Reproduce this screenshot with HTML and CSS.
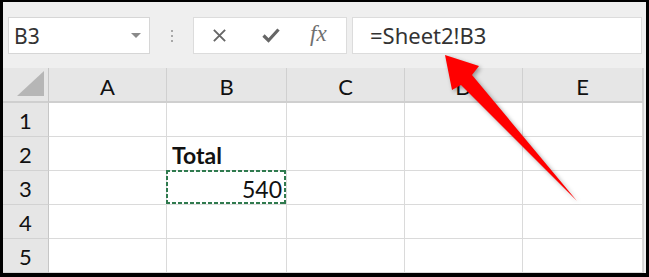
FILE: index.html
```html
<!doctype html>
<html lang="en">

<head>
  <meta charset="utf-8">
  <meta name="viewport" content="width=device-width, initial-scale=1">
  <link rel="stylesheet" href="styles.css">
  <title>Sheet reference</title>
</head>

<body>
  <div class="screen">
    <div class="window">
      <div class="toolbar">
        <div class="namebox">
          <span class="namebox-text">B3</span>
          <span class="namebox-arrow"></span>
        </div>
        <div class="grip">
          <span></span><span></span><span></span>
        </div>
        <div class="buttons">
          <svg class="btn-cancel" viewBox="0 0 16 16">
            <path d="M2 2L14 14M14 2L2 14" stroke="#666" stroke-width="2" fill="none" />
          </svg>
          <svg class="btn-enter" viewBox="0 0 18 15">
            <path d="M1.5 7.5L6.5 12.5L16.5 1.5" stroke="#666" stroke-width="3.2" fill="none" />
          </svg>
          <span class="fx">fx</span>
        </div>
        <div class="formula">=Sheet2!B3</div>
      </div>

      <div class="sheet">
        <div class="corner"><span class="corner-tri"></span></div>
        <div class="col-head">A</div>
        <div class="col-head">B</div>
        <div class="col-head">C</div>
        <div class="col-head">D</div>
        <div class="col-head">E</div>

        <div class="row-head">1</div>
        <div class="cell"></div>
        <div class="cell"></div>
        <div class="cell"></div>
        <div class="cell"></div>
        <div class="cell"></div>

        <div class="row-head">2</div>
        <div class="cell"></div>
        <div class="cell bold">Total</div>
        <div class="cell"></div>
        <div class="cell"></div>
        <div class="cell"></div>

        <div class="row-head">3</div>
        <div class="cell"></div>
        <div class="cell num copied">540</div>
        <div class="cell"></div>
        <div class="cell"></div>
        <div class="cell"></div>

        <div class="row-head">4</div>
        <div class="cell"></div>
        <div class="cell"></div>
        <div class="cell"></div>
        <div class="cell"></div>
        <div class="cell"></div>

        <div class="row-head">5</div>
        <div class="cell"></div>
        <div class="cell"></div>
        <div class="cell"></div>
        <div class="cell"></div>
        <div class="cell"></div>
      </div>
    </div>

    <svg class="arrow" viewBox="0 0 649 277">
      <polygon fill="#ff0000" points="445,55 479,66 472,75 577,201 461,85 452,90" />
    </svg>
  </div>
</body>

</html>
```

FILE: styles.css
```css
body {
  margin: 0;
  background-color: #000;
  font-family: "Noto Sans", "Open Sans", sans-serif;
}

.screen {
  position: relative;
  width: 649px;
  height: 277px;
  box-sizing: border-box;
  padding: 2px 3px 4px 3px;
  background-color: #000;
}

.window {
  height: 271px;
  background-color: #efefef;
  display: flex;
  flex-direction: column;
}

/* formula bar */

.toolbar {
  height: 66px;
  box-sizing: border-box;
  padding: 15px 0 0 5px;
  display: flex;
  align-items: flex-start;
}

.namebox {
  width: 142px;
  height: 37px;
  box-sizing: border-box;
  background: #fff;
  border: 1px solid #d6d6d6;
  display: flex;
  align-items: center;
  justify-content: space-between;
  padding: 0 8px 0 5px;
}

.namebox-text {
  font-size: 21px;
  color: #333;
}

.namebox-arrow {
  width: 0;
  height: 0;
  border-left: 5px solid transparent;
  border-right: 5px solid transparent;
  border-top: 5px solid #8a8a8a;
}

.grip {
  width: 43px;
  height: 37px;
  display: flex;
  flex-direction: column;
  align-items: center;
  justify-content: center;
  gap: 3px;
}

.grip span {
  width: 2px;
  height: 2px;
  background: #a8a8a8;
}

.buttons {
  width: 154px;
  height: 37px;
  box-sizing: border-box;
  background: #fff;
  border: 1px solid #dcdcdc;
  display: flex;
  align-items: center;
  padding-left: 18px;
}

.btn-cancel {
  width: 15px;
  height: 15px;
}

.btn-enter {
  width: 18px;
  height: 15px;
  margin-left: 35px;
}

.fx {
  font-family: "Liberation Serif", serif;
  font-style: italic;
  font-size: 23px;
  color: #707070;
  margin-left: 30px;
  margin-top: -4px;
}

.formula {
  width: 290px;
  height: 37px;
  box-sizing: border-box;
  margin-left: 5px;
  background: #fff;
  border: 1px solid #dcdcdc;
  padding-left: 17px;
  font-size: 22px;
  line-height: 35px;
  color: #333;
}

/* sheet */

.sheet {
  display: grid;
  grid-template-columns: 46px 118px 120px 118px 118px 120px;
  grid-template-rows: 35px repeat(5, 34px);
  width: 640px;
  background: #fff;
  border-right: 1px solid #d4d4d4;
  font-family: Lato, "Noto Sans", sans-serif;
  font-size: 22px;
  color: #111;
}

.corner,
.col-head,
.row-head,
.cell {
  box-sizing: border-box;
}

.corner {
  background: #e6e6e6;
  border-right: 1px solid #c6c6c6;
  border-bottom: 2px solid #cfcfcf;
  display: flex;
  align-items: flex-end;
  justify-content: flex-end;
  padding: 0 4px 5px 0;
}

.corner-tri {
  width: 0;
  height: 0;
  border-left: 27px solid transparent;
  border-bottom: 25px solid #b6b6b6;
}

.col-head {
  background: #e6e6e6;
  border-right: 1px solid #d0d0d0;
  border-bottom: 2px solid #cfcfcf;
  display: flex;
  align-items: center;
  justify-content: center;
  padding-top: 4px;
}

.row-head {
  background: #e6e6e6;
  border-right: 1px solid #c6c6c6;
  border-bottom: 1px solid #d2d2d2;
  display: flex;
  align-items: center;
  justify-content: center;
  padding-top: 2px;
}

.cell {
  border-right: 1px solid #dadada;
  border-bottom: 1px solid #dadada;
  display: flex;
  align-items: center;
  padding: 2px 4px 0 5px;
}

.bold {
  font-weight: bold;
  font-size: 23px;
}

.num {
  justify-content: flex-end;
  font-size: 23px;
}

.copied {
  position: relative;
}

.copied::after {
  content: "";
  position: absolute;
  inset: -1px 0 0 -1px;
  background:
    repeating-linear-gradient(90deg, #2f7a4e 0 4px, transparent 4px 6px) top / 100% 2px no-repeat,
    repeating-linear-gradient(90deg, #2f7a4e 0 4px, transparent 4px 6px) bottom / 100% 2px no-repeat,
    repeating-linear-gradient(0deg, #2f7a4e 0 4px, transparent 4px 6px) left / 2px 100% no-repeat,
    repeating-linear-gradient(0deg, #2f7a4e 0 4px, transparent 4px 6px) right / 2px 100% no-repeat;
}

.arrow {
  position: absolute;
  top: 0;
  left: 0;
  width: 649px;
  height: 277px;
  pointer-events: none;
  filter: drop-shadow(2px 2px 2px rgba(0, 0, 0, 0.35));
}
```
